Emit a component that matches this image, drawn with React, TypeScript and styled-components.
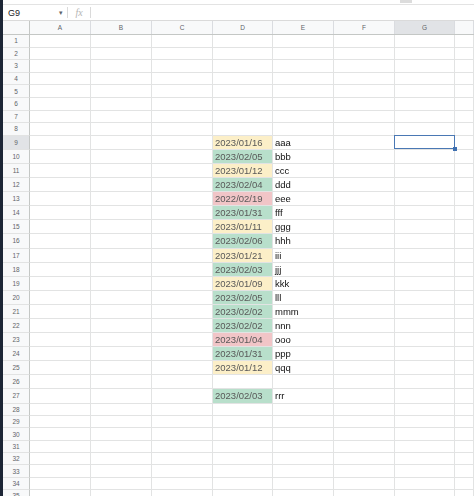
import React, { FC } from "react";
import styled, { createGlobalStyle } from "styled-components";

const GlobalStyle = createGlobalStyle`
  html, body {
    margin: 0;
    padding: 0;
    background: #ffffff;
    font-family: "Liberation Sans", Arial, sans-serif;
    overflow: hidden;
    -webkit-font-smoothing: antialiased;
  }
`;

type Tone = "yellow" | "green" | "pink";

const tones: Record<Tone, string> = {
  yellow: "#fcefc8",
  green: "#b8dfcb",
  pink: "#f1c5c7",
};

const data: Record<number, [string, string, Tone]> = {
  9: ["2023/01/16", "aaa", "yellow"],
  10: ["2023/02/05", "bbb", "green"],
  11: ["2023/01/12", "ccc", "yellow"],
  12: ["2023/02/04", "ddd", "green"],
  13: ["2022/02/19", "eee", "pink"],
  14: ["2023/01/31", "fff", "green"],
  15: ["2023/01/11", "ggg", "yellow"],
  16: ["2023/02/06", "hhh", "green"],
  17: ["2023/01/21", "iii", "yellow"],
  18: ["2023/02/03", "jjj", "green"],
  19: ["2023/01/09", "kkk", "yellow"],
  20: ["2023/02/05", "lll", "green"],
  21: ["2023/02/02", "mmm", "green"],
  22: ["2023/02/02", "nnn", "green"],
  23: ["2023/01/04", "ooo", "pink"],
  24: ["2023/01/31", "ppp", "green"],
  25: ["2023/01/12", "qqq", "yellow"],
  27: ["2023/02/03", "rrr", "green"],
};

const columns = ["A", "B", "C", "D", "E", "F", "G"];
const rows = Array.from({ length: 35 }, (_, i) => i + 1);
const rowHeight = (r: number) => (r >= 9 && r <= 27 ? 14.1 : r < 9 ? 12.6 : 12.4);

export default function App() {
  return (
    <>
      <GlobalStyle />
      <Screen>
        <SideStrip />
        <Main>
          <TopStrip>
            <ToolNub />
          </TopStrip>
          <FormulaBar>
            <NameBox>
              <span>G9</span>
              <Caret>▾</Caret>
            </NameBox>
            <Divider />
            <Fx>fx</Fx>
            <Divider />
          </FormulaBar>
          <Sheet>
            <HeaderRow>
              <Corner />
              {columns.map((c) => (
                <ColHeader key={c} active={c === "G"}>
                  {c}
                </ColHeader>
              ))}
              <ColHeader />
            </HeaderRow>
            {rows.map((r) => (
              <Row key={r} r={r} />
            ))}
          </Sheet>
        </Main>
      </Screen>
    </>
  );
}

const Row: FC<{ r: number }> = ({ r }) => {
  const entry = data[r];
  return (
    <GridRow style={{ height: rowHeight(r) }}>
      <RowHeader active={r === 9}>{r}</RowHeader>
      {columns.map((c) => {
        if (c === "D" && entry) {
          return (
            <Cell key={c} tone={entry[2]}>
              <DateText>{entry[0]}</DateText>
            </Cell>
          );
        }
        if (c === "E" && entry) {
          return (
            <Cell key={c}>
              <Text>{entry[1]}</Text>
            </Cell>
          );
        }
        return <Cell key={c} selected={c === "G" && r === 9} />;
      })}
      <Cell />
    </GridRow>
  );
};

const Screen = styled.div`
  display: flex;
  width: 474px;
  height: 496px;
  overflow: hidden;
`;

const SideStrip = styled.div`
  flex: 0 0 3px;
  background: #1d2636;
`;

const Main = styled.div`
  flex: 1 1 auto;
  display: flex;
  flex-direction: column;
  min-width: 0;
`;

const TopStrip = styled.div`
  flex: 0 0 4px;
  border-bottom: 1px solid #e3e3e3;
  display: flex;
  padding-left: 397px;
`;

const ToolNub = styled.div`
  width: 12px;
  height: 3px;
  background: #dcdcdc;
`;

const FormulaBar = styled.div`
  flex: 0 0 15px;
  display: flex;
  align-items: center;
  border-bottom: 1px solid #dadada;
  font-size: 9px;
  color: #202124;
`;

const NameBox = styled.div`
  width: 64px;
  display: flex;
  align-items: center;
  justify-content: space-between;
  padding: 0 4px 0 5px;
  box-sizing: border-box;
`;

const Caret = styled.span`
  font-size: 7px;
  color: #5f6368;
`;

const Divider = styled.div`
  width: 1px;
  height: 11px;
  background: #dadada;
`;

const Fx = styled.span`
  width: 22px;
  text-align: center;
  font-family: "Liberation Serif", serif;
  font-style: italic;
  font-size: 10px;
  color: #b4b4b4;
`;

const Sheet = styled.div`
  display: flex;
  flex-direction: column;
`;

const gridCols = "27px 61px 61px 61px 60px 61px 61px 60px 1fr";

const HeaderRow = styled.div`
  flex: 0 0 13px;
  display: grid;
  grid-template-columns: ${gridCols};
  background: #f8f9fa;
  border-bottom: 1px solid #c4c7c5;
`;

const Corner = styled.div`
  border-right: 1px solid #c4c7c5;
`;

const ColHeader = styled.div<{ active?: boolean }>`
  display: flex;
  align-items: center;
  justify-content: center;
  font-size: 6.5px;
  color: #5f6368;
  border-right: 1px solid #dadce0;
  background: ${({ active }) => (active ? "#e1e3e6" : "transparent")};
`;

const GridRow = styled.div`
  display: grid;
  flex: 0 0 auto;
  grid-template-columns: ${gridCols};
  box-sizing: border-box;
`;

const RowHeader = styled.div<{ active?: boolean }>`
  display: flex;
  align-items: center;
  justify-content: center;
  font-size: 6.5px;
  color: #5f6368;
  background: ${({ active }) => (active ? "#e1e3e6" : "#f8f9fa")};
  border-right: 1px solid #c4c7c5;
  border-bottom: 1px solid #e2e3e3;
`;

const Cell = styled.div<{ tone?: Tone; selected?: boolean }>`
  position: relative;
  display: flex;
  align-items: center;
  padding-left: 2px;
  background: ${({ tone }) => (tone ? tones[tone] : "#ffffff")};
  border-right: 1px solid #e2e3e3;
  border-bottom: 1px solid #e2e3e3;
  min-width: 0;

  ${({ selected }) =>
    selected &&
    `
    &::after {
      content: "";
      position: absolute;
      inset: -1px -1px 0 -1px;
      border: 1.5px solid #4a78b4;
    }
    &::before {
      content: "";
      position: absolute;
      right: -3px;
      bottom: -2px;
      width: 4px;
      height: 4px;
      background: #3e6fb0;
      z-index: 1;
    }
  `}
`;

const Text = styled.span`
  font-size: 9.5px;
  color: #111111;
  white-space: nowrap;
  will-change: transform;
`;

const DateText = styled(Text)`
  color: #585858;
`;
